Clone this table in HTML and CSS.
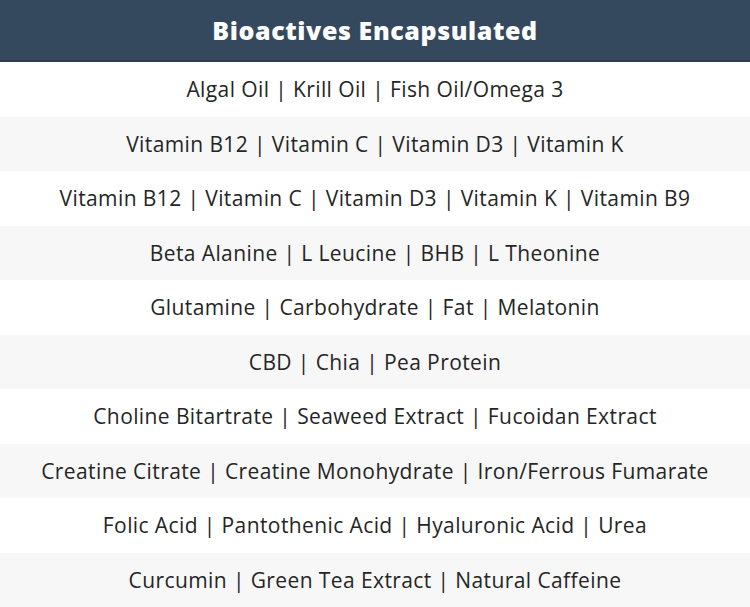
FILE: index.html
```html
<!DOCTYPE html>
<html lang="en">
<head>
<meta charset="utf-8">
<title>Bioactives Encapsulated</title>
<link rel="stylesheet" href="styles.css">
</head>
<body>
<table class="bio-table">
  <thead>
    <tr><th>Bioactives Encapsulated</th></tr>
  </thead>
  <tbody>
    <tr><td>Algal Oil | Krill Oil | Fish Oil/Omega 3</td></tr>
    <tr><td>Vitamin B12 | Vitamin C | Vitamin D3 | Vitamin K</td></tr>
    <tr><td>Vitamin B12 | Vitamin C | Vitamin D3 | Vitamin K | Vitamin B9</td></tr>
    <tr><td>Beta Alanine | L Leucine | BHB | L Theonine</td></tr>
    <tr><td>Glutamine | Carbohydrate | Fat | Melatonin</td></tr>
    <tr><td>CBD | Chia | Pea Protein</td></tr>
    <tr><td>Choline Bitartrate | Seaweed Extract | Fucoidan Extract</td></tr>
    <tr><td>Creatine Citrate | Creatine Monohydrate | Iron/Ferrous Fumarate</td></tr>
    <tr><td>Folic Acid | Pantothenic Acid | Hyaluronic Acid | Urea</td></tr>
    <tr><td>Curcumin | Green Tea Extract | Natural Caffeine</td></tr>
  </tbody>
</table>
</body>
</html>
```
FILE: styles.css
```css
html, body {
  margin: 0;
  padding: 0;
  background: #ffffff;
}

.bio-table {
  width: 100%;
  border-collapse: collapse;
  font-family: "Open Sans", "Noto Sans", sans-serif;
}

.bio-table th {
  height: 60px;
  padding: 0;
  background: #34495e;
  border-bottom: 2px solid #2b3d4f;
  color: #ffffff;
  font-size: 25px;
  font-weight: 800;
  letter-spacing: 0.6px;
  text-align: center;
  vertical-align: middle;
}

.bio-table td {
  height: 54.5px;
  padding: 0;
  color: #252525;
  font-size: 21px;
  font-weight: 400;
  letter-spacing: 0.4px;
  text-align: center;
  vertical-align: middle;
}

.bio-table tbody tr:nth-child(even) td {
  background: #f7f7f7;
}
```
